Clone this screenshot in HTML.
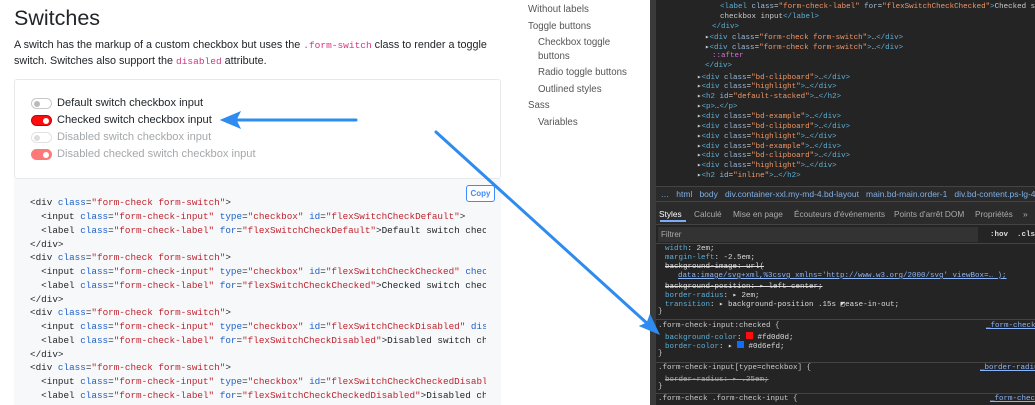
<!DOCTYPE html>
<html><head><style>
*{margin:0;padding:0;box-sizing:border-box}
html,body{width:1035px;height:405px;overflow:hidden}
body{background:#fff;font-family:"Liberation Sans",sans-serif;position:relative}
#w{position:absolute;left:0;top:0;width:1035px;height:405px;overflow:hidden}
.a{position:absolute;white-space:nowrap}
h1{position:absolute;left:14px;top:6px;font-size:21.5px;font-weight:500;color:#212529}
.p{font-size:10.8px;color:#212529;line-height:16px}
.pk{color:#d63384;font-family:"Liberation Mono",monospace;font-size:9.5px}
.box{position:absolute;left:14px;top:79px;width:487px;height:100px;border:1px solid #e6e8ea;border-radius:3px}
.sw{position:absolute;left:31px;width:21px;height:11px;border-radius:6px;border:1px solid #c8c8c8;background:#fff}
.sw i{position:absolute;top:2px;width:6px;height:6px;border-radius:50%;background:#bbb}
.lb{position:absolute;left:57px;font-size:11.1px;color:#212529}
.code{position:absolute;left:14px;top:179px;width:487px;height:226px;background:#f7f8fa;overflow:hidden}
.cl{position:absolute;left:16px;font-family:"Liberation Mono",monospace;font-size:9.3px;color:#212529;white-space:pre;width:456px;overflow:hidden}
.b{color:#2060c8}.r{color:#c0232e}
.nav{position:absolute;left:528px;font-size:9.7px;color:#555}
.dt{position:absolute;left:650px;top:0;width:385px;height:405px;background:#242424;font-family:"Liberation Mono",monospace;font-size:7.5px;color:#ccc;overflow:hidden}
.dl{position:absolute;white-space:pre}
.t{color:#5db0d7}.at{color:#9bbbdc}.v{color:#f29766}
.tb{position:absolute;top:0;line-height:24px}
</style></head><body><div id="w">
<h1>Switches</h1>
<div class="a p" style="left:14px;top:37px">A switch has the markup of a custom checkbox but uses the <span class="pk">.form-switch</span> class to render a toggle</div>
<div class="a p" style="left:14px;top:53px">switch. Switches also support the <span class="pk">disabled</span> attribute.</div>
<div class="box"></div>
<div class="sw" style="top:98px"><i style="left:2px"></i></div>
<div class="lb" style="top:97px">Default switch checkbox input</div>
<div class="sw" style="top:115px;background:#fd0d0d;border-color:#c00"><i style="left:11px;background:#fff"></i></div>
<div class="lb" style="top:114px">Checked switch checkbox input</div>
<div class="sw" style="top:132px;border-color:#e2e2e2"><i style="left:2px;background:#ddd"></i></div>
<div class="lb" style="top:131px;color:#a5a8ab">Disabled switch checkbox input</div>
<div class="sw" style="top:149px;background:#fd7a78;border-color:#fd7a78"><i style="left:11px;background:#fff"></i></div>
<div class="lb" style="top:148px;color:#a5a8ab">Disabled checked switch checkbox input</div>
<div class="code">
<div class="cl" style="top:18px">&lt;div <span class="b">class</span>=<span class="r">"form-check form-switch"</span>&gt;</div>
<div class="cl" style="top:32px">  &lt;input <span class="b">class</span>=<span class="r">"form-check-input"</span> <span class="b">type</span>=<span class="r">"checkbox"</span> <span class="b">id</span>=<span class="r">"flexSwitchCheckDefault"</span>&gt;</div>
<div class="cl" style="top:46px">  &lt;label <span class="b">class</span>=<span class="r">"form-check-label"</span> <span class="b">for</span>=<span class="r">"flexSwitchCheckDefault"</span>&gt;Default switch chec</div>
<div class="cl" style="top:60px">&lt;/div&gt;</div>
<div class="cl" style="top:73px">&lt;div <span class="b">class</span>=<span class="r">"form-check form-switch"</span>&gt;</div>
<div class="cl" style="top:87px">  &lt;input <span class="b">class</span>=<span class="r">"form-check-input"</span> <span class="b">type</span>=<span class="r">"checkbox"</span> <span class="b">id</span>=<span class="r">"flexSwitchCheckChecked"</span> <span class="b">chec</span></div>
<div class="cl" style="top:101px">  &lt;label <span class="b">class</span>=<span class="r">"form-check-label"</span> <span class="b">for</span>=<span class="r">"flexSwitchCheckChecked"</span>&gt;Checked switch chec</div>
<div class="cl" style="top:115px">&lt;/div&gt;</div>
<div class="cl" style="top:128px">&lt;div <span class="b">class</span>=<span class="r">"form-check form-switch"</span>&gt;</div>
<div class="cl" style="top:142px">  &lt;input <span class="b">class</span>=<span class="r">"form-check-input"</span> <span class="b">type</span>=<span class="r">"checkbox"</span> <span class="b">id</span>=<span class="r">"flexSwitchCheckDisabled"</span> <span class="b">dis</span></div>
<div class="cl" style="top:156px">  &lt;label <span class="b">class</span>=<span class="r">"form-check-label"</span> <span class="b">for</span>=<span class="r">"flexSwitchCheckDisabled"</span>&gt;Disabled switch ch</div>
<div class="cl" style="top:170px">&lt;/div&gt;</div>
<div class="cl" style="top:183px">&lt;div <span class="b">class</span>=<span class="r">"form-check form-switch"</span>&gt;</div>
<div class="cl" style="top:197px">  &lt;input <span class="b">class</span>=<span class="r">"form-check-input"</span> <span class="b">type</span>=<span class="r">"checkbox"</span> <span class="b">id</span>=<span class="r">"flexSwitchCheckCheckedDisabl</span></div>
<div class="cl" style="top:211px">  &lt;label <span class="b">class</span>=<span class="r">"form-check-label"</span> <span class="b">for</span>=<span class="r">"flexSwitchCheckCheckedDisabled"</span>&gt;Disabled ch</div>
</div>
<div class="a" style="left:466px;top:185px;width:29px;height:17px;border:1px solid #3d8bfd;border-radius:3px;background:#fff;font-size:8px;color:#3d8bfd;text-align:center;line-height:15px;font-weight:bold">Copy</div>

<div class="nav" style="top:4px">Without labels</div>
<div class="nav" style="top:21px">Toggle buttons</div>
<div class="nav" style="left:538px;top:37px">Checkbox toggle</div>
<div class="nav" style="left:538px;top:51px">buttons</div>
<div class="nav" style="left:538px;top:67px">Radio toggle buttons</div>
<div class="nav" style="left:538px;top:84px">Outlined styles</div>
<div class="nav" style="top:100px">Sass</div>
<div class="nav" style="left:538px;top:117px">Variables</div>

<div class="dt">
<div style="position:absolute;left:0;top:0;width:6px;height:405px;background:#3a3a3a"></div>
<div class="dl" style="left:70px;top:3px"><span class="t">&lt;label</span> <span class="at">class</span>=<span class="v">"form-check-label"</span> <span class="at">for</span>=<span class="v">"flexSwitchCheckChecked"</span><span class="t">&gt;</span>Checked swi</div>
<div class="dl" style="left:70px;top:13px">checkbox input<span class="t">&lt;/label&gt;</span></div>
<div class="dl" style="left:62px;top:23px"><span class="t">&lt;/div&gt;</span></div>
<div class="dl" style="left:55px;top:32px">▸<span class="t">&lt;div</span> <span class="at">class</span>=<span class="v">"form-check form-switch"</span><span class="t">&gt;</span>…<span class="t">&lt;/div&gt;</span></div>
<div class="dl" style="left:55px;top:42px">▸<span class="t">&lt;div</span> <span class="at">class</span>=<span class="v">"form-check form-switch"</span><span class="t">&gt;</span>…<span class="t">&lt;/div&gt;</span></div>
<div class="dl" style="left:62px;top:52px;color:#d670d6">::after</div>
<div class="dl" style="left:55px;top:62px"><span class="t">&lt;/div&gt;</span></div>
<div class="dl" style="left:47px;top:72px">▸<span class="t">&lt;div</span> <span class="at">class</span>=<span class="v">"bd-clipboard"</span><span class="t">&gt;</span>…<span class="t">&lt;/div&gt;</span></div>
<div class="dl" style="left:47px;top:81px">▸<span class="t">&lt;div</span> <span class="at">class</span>=<span class="v">"highlight"</span><span class="t">&gt;</span>…<span class="t">&lt;/div&gt;</span></div>
<div class="dl" style="left:47px;top:91px">▸<span class="t">&lt;h2</span> <span class="at">id</span>=<span class="v">"default-stacked"</span><span class="t">&gt;</span>…<span class="t">&lt;/h2&gt;</span></div>
<div class="dl" style="left:47px;top:101px">▸<span class="t">&lt;p&gt;</span>…<span class="t">&lt;/p&gt;</span></div>
<div class="dl" style="left:47px;top:111px">▸<span class="t">&lt;div</span> <span class="at">class</span>=<span class="v">"bd-example"</span><span class="t">&gt;</span>…<span class="t">&lt;/div&gt;</span></div>
<div class="dl" style="left:47px;top:121px">▸<span class="t">&lt;div</span> <span class="at">class</span>=<span class="v">"bd-clipboard"</span><span class="t">&gt;</span>…<span class="t">&lt;/div&gt;</span></div>
<div class="dl" style="left:47px;top:131px">▸<span class="t">&lt;div</span> <span class="at">class</span>=<span class="v">"highlight"</span><span class="t">&gt;</span>…<span class="t">&lt;/div&gt;</span></div>
<div class="dl" style="left:47px;top:141px">▸<span class="t">&lt;div</span> <span class="at">class</span>=<span class="v">"bd-example"</span><span class="t">&gt;</span>…<span class="t">&lt;/div&gt;</span></div>
<div class="dl" style="left:47px;top:150px">▸<span class="t">&lt;div</span> <span class="at">class</span>=<span class="v">"bd-clipboard"</span><span class="t">&gt;</span>…<span class="t">&lt;/div&gt;</span></div>
<div class="dl" style="left:47px;top:160px">▸<span class="t">&lt;div</span> <span class="at">class</span>=<span class="v">"highlight"</span><span class="t">&gt;</span>…<span class="t">&lt;/div&gt;</span></div>
<div class="dl" style="left:47px;top:170px">▸<span class="t">&lt;h2</span> <span class="at">id</span>=<span class="v">"inline"</span><span class="t">&gt;</span>…<span class="t">&lt;/h2&gt;</span></div>
<div style="position:absolute;left:6px;top:186px;width:379px;height:15px;background:#2a2a2a;border-top:1px solid #444;font-family:'Liberation Sans',sans-serif;font-size:8.5px;color:#7fb0e8;white-space:pre;line-height:14px">  …   html   body   div.container-xxl.my-md-4.bd-layout   main.bd-main.order-1   div.bd-content.ps-lg-4</div>
<div style="position:absolute;left:6px;top:201px;width:379px;height:24px;background:#2b2b2b;border-top:1px solid #444;border-bottom:1px solid #444;font-family:'Liberation Sans',sans-serif;font-size:8.3px;color:#aaa;white-space:pre">
<span class="tb" style="left:3px;color:#fff">Styles</span>
<span class="tb" style="left:38px">Calculé</span>
<span class="tb" style="left:77px">Mise en page</span>
<span class="tb" style="left:138px">Écouteurs d'événements</span>
<span class="tb" style="left:238px">Points d'arrêt DOM</span>
<span class="tb" style="left:319px">Propriétés</span>
<span class="tb" style="left:367px">»</span>
</div>
<div style="position:absolute;left:10px;top:220px;width:26px;height:2px;background:#7cacf8"></div>
<div style="position:absolute;left:6px;top:226px;width:379px;height:18px;background:#242424;border-bottom:1px solid #444"></div>
<div style="position:absolute;left:8px;top:227px;width:320px;height:15px;background:#333;font-family:'Liberation Sans',sans-serif;font-size:8px;color:#aaa;line-height:15px;padding-left:3px">Filtrer</div>
<div class="dl" style="left:340px;top:231px;color:#ddd;font-weight:bold">:hov  .cls</div>
<div class="dl" style="left:15px;top:245px;color:#ddd"><span class="t">width</span>: 2em;</div>
<div class="dl" style="left:15px;top:254px;color:#ddd"><span class="t">margin-left</span>: -2.5em;</div>
<div class="dl" style="left:15px;top:263px;color:#ddd;text-decoration:line-through">background-image: url(</div>
<div class="dl" style="left:28px;top:272px;color:#8ab4f8;text-decoration:underline">data:image/svg+xml,%3csvg xmlns='http://www.w3.org/2000/svg' viewBox=… );</div>
<div class="dl" style="left:15px;top:281px;color:#ddd;text-decoration:line-through">background-position: ▸ left center;</div>
<div class="dl" style="left:15px;top:290px;color:#ddd"><span class="t">border-radius</span>: ▸ 2em;</div>
<div class="dl" style="left:15px;top:299px;color:#ddd"><span class="t">transition</span>: ▸ background-position .15s ◩ease-in-out;</div>
<div class="dl" style="left:8px;top:308px">}</div>
<div style="position:absolute;left:6px;top:319px;width:379px;height:1px;background:#444"></div>
<div class="dl" style="left:8px;top:322px;color:#ccc">.form-check-input:checked {</div>
<div class="dl" style="left:336px;top:322px;color:#8ab4f8;text-decoration:underline">_form-check.</div>
<div class="dl" style="left:15px;top:332px;color:#ddd"><span class="t">background-color</span>: <span style="display:inline-block;width:7px;height:7px;background:#fd0d0d"></span> #fd0d0d;</div>
<div class="dl" style="left:15px;top:341px;color:#ddd"><span class="t">border-color</span>: ▸ <span style="display:inline-block;width:7px;height:7px;background:#0d6efd"></span> #0d6efd;</div>
<div class="dl" style="left:8px;top:350px">}</div>
<div style="position:absolute;left:6px;top:362px;width:379px;height:1px;background:#444"></div>
<div class="dl" style="left:8px;top:364px;color:#ccc">.form-check-input[type=checkbox] {</div>
<div class="dl" style="left:330px;top:364px;color:#8ab4f8;text-decoration:underline">_border-radius.</div>
<div class="dl" style="left:15px;top:374px;color:#aaa;text-decoration:line-through">border-radius: ▸ .25em;</div>
<div class="dl" style="left:8px;top:383px">}</div>
<div style="position:absolute;left:6px;top:393px;width:379px;height:1px;background:#444"></div>
<div class="dl" style="left:8px;top:395px;color:#ccc">.form-check .form-check-input {</div>
<div class="dl" style="left:340px;top:395px;color:#8ab4f8;text-decoration:underline">_form-check</div>
</div>

<svg style="position:absolute;left:0;top:0" width="1035" height="405">
<g stroke="#2e8bef" stroke-width="3" fill="#2e8bef" stroke-linecap="round">
<line x1="356" y1="120" x2="232" y2="120"/>
<polygon points="221,120 240,112 236,120 240,128" stroke-width="1"/>
<line x1="436" y1="132" x2="650" y2="326"/>
<polygon points="659,334 640,326 647,323 650,315" stroke-width="1"/>
</g>
</svg>
</div></body></html>
